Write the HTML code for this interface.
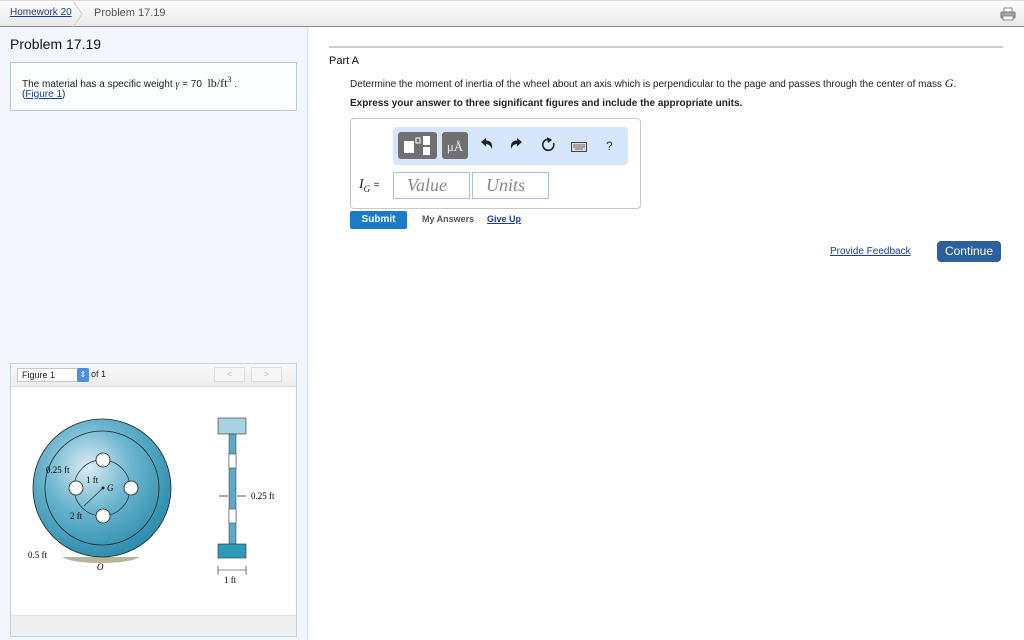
<!DOCTYPE html>
<html><head><meta charset="utf-8"><style>
*{margin:0;padding:0;box-sizing:border-box}
body{width:1024px;height:640px;overflow:hidden;background:#fff;font-family:"Liberation Sans",Arial,sans-serif;color:#222;position:relative}
.top{position:absolute;left:0;top:0;width:1024px;height:27px;background:linear-gradient(#fdfdfd,#e9e9e9);border-bottom:1px solid #8a8a8a;border-top:1px solid #ddd}
.abs{position:absolute}
a{color:#1a3e9a;text-decoration:underline}
.left{position:absolute;left:0;top:27px;width:308px;height:613px;background:#f3f7fd;border-right:1px solid #d8e0ea}
.mi{font-family:"Liberation Serif",serif;font-style:italic}
.btn{position:absolute;border-radius:3px}
</style></head><body>
<div class="top">
<a class="abs" style="left:10px;top:6px;font-size:10px">Homework 20</a>
<svg class="abs" style="left:72px;top:0" width="12" height="26"><path d="M1 0 L10 13 L1 26" fill="none" stroke="#d0d0d0"/></svg>
<div class="abs" style="left:94px;top:6px;font-size:11px;color:#555">Problem 17.19</div>
<svg class="abs" style="left:1000px;top:6px" width="16" height="14"><rect x="4" y="1" width="8" height="5" fill="#fff" stroke="#888"/><rect x="1" y="5" width="14" height="6" rx="1" fill="#9aa" stroke="#777"/><rect x="3" y="9" width="10" height="4" fill="#fff" stroke="#888"/></svg>
</div>
<div class="left">
<div class="abs" style="left:10px;top:9px;font-size:14px;color:#111">Problem 17.19</div>
<div class="abs" style="left:10px;top:35px;width:287px;height:49px;background:#fbfdff;border:1px solid #b7cadc">
<div class="abs" style="left:11px;top:10px;font-size:10px;white-space:nowrap;line-height:13px">The material has a specific weight <span class="mi">γ</span> = 70 &nbsp;<span style="font-family:'Liberation Serif',serif;font-size:12px">lb/ft<span style="font-size:8px;vertical-align:5px">3</span></span> .</div>
<div class="abs" style="left:11px;top:26px;font-size:10px">(<a>Figure 1</a>)</div>
</div>
<div class="abs" style="left:10px;top:336px;width:287px;height:274px;border:1px solid #c4d3e2;background:#fff">
<div class="abs" style="left:0;top:0;width:285px;height:23px;background:linear-gradient(#fafafa,#ececec);border-bottom:1px solid #d6dde6">
<div class="abs" style="left:6px;top:4px;width:72px;height:14px;border:1px solid #c8c8c8;background:#fff;font-size:9px;padding-left:4px;line-height:12px">Figure 1</div>
<div class="abs" style="left:66px;top:4px;width:12px;height:14px;background:#4a90e0;border-radius:2px;color:#fff;font-size:8px;text-align:center;line-height:14px">⇕</div>
<div class="abs" style="left:80px;top:5px;font-size:9px">of 1</div>
<div class="abs" style="left:203px;top:3px;width:31px;height:15px;border:1px solid #ddd;background:#f6f6f6;color:#bbb;font-size:9px;text-align:center;line-height:13px">&lt;</div>
<div class="abs" style="left:240px;top:3px;width:31px;height:15px;border:1px solid #ddd;background:#f6f6f6;color:#bbb;font-size:9px;text-align:center;line-height:13px">&gt;</div>
</div>
<div class="abs" style="left:0;top:251px;width:285px;height:21px;background:#efefef;border-top:1px solid #dde4ec"></div>
<svg class="abs" style="left:-11px;top:-364px" width="310" height="640" font-family="Liberation Serif,serif" font-size="9">
<defs><radialGradient id="g" cx="0.4" cy="0.35" r="0.7"><stop offset="0" stop-color="#dcedf5"/><stop offset="0.45" stop-color="#6bb5cf"/><stop offset="1" stop-color="#2589a8"/></radialGradient></defs>
<path d="M62 557 L140 557 Q130 563 100 563 Q72 563 62 557Z" fill="#bbb49c"/>
<circle cx="102" cy="488" r="69" fill="url(#g)" stroke="#222" stroke-width="0.8"/>
<circle cx="102" cy="488" r="57" fill="none" stroke="#222" stroke-width="0.8"/>
<circle cx="102" cy="488" r="28" fill="none" stroke="#222" stroke-width="0.7"/>
<g fill="#fff" stroke="#222" stroke-width="0.8"><circle cx="103" cy="460" r="7"/><circle cx="131" cy="488" r="7"/><circle cx="103" cy="516" r="7"/><circle cx="76" cy="488" r="7"/></g>
<circle cx="103" cy="488" r="1.5" fill="#222"/><line x1="103" y1="488" x2="84" y2="506" stroke="#222" stroke-width="0.7"/>
<text x="46" y="473">0.25 ft</text><text x="86" y="483">1 ft</text><text x="107" y="491" font-style="italic">G</text><text x="70" y="519">2 ft</text><text x="28" y="558">0.5 ft</text><text x="97" y="570" font-style="italic">O</text>
<rect x="218" y="418" width="28" height="16" fill="#a8d2e2" stroke="#333" stroke-width="0.6"/>
<rect x="229" y="434" width="7" height="110" fill="#5aaac6" stroke="#333" stroke-width="0.5"/>
<rect x="229" y="454" width="7" height="14" fill="#fff" stroke="#333" stroke-width="0.5"/>
<rect x="229" y="509" width="7" height="14" fill="#fff" stroke="#333" stroke-width="0.5"/>
<rect x="218" y="544" width="28" height="14" fill="#2f9ab8" stroke="#333" stroke-width="0.6"/>
<path d="M219 496 H228 M237 496 H246" stroke="#222" stroke-width="0.7"/>
<text x="251" y="499">0.25 ft</text>
<path d="M218 566 V575 M246 566 V575 M218 570 H246" stroke="#222" stroke-width="0.6" fill="none"/>
<text x="224" y="583">1 ft</text>
</svg>
</div>
</div>
<div class="abs" style="left:329px;top:46px;width:674px;height:2px;background:#ccc"></div>
<div class="abs" style="left:329px;top:55px;font-size:11px;color:#111">Part A</div>
<div class="abs" style="left:350px;top:76px;font-size:10px;white-space:nowrap">Determine the moment of inertia of the wheel about an axis which is perpendicular to the page and passes through the center of mass <span class="mi" style="font-size:12px">G</span>.</div>
<div class="abs" style="left:350px;top:98px;font-size:10px;font-weight:bold">Express your answer to three significant figures and include the appropriate units.</div>
<div class="abs" style="left:350px;top:118px;width:291px;height:91px;border:1px solid #c8c8c8;border-radius:4px"></div>
<div class="abs" style="left:393px;top:127px;width:235px;height:38px;background:#d6e7fb;border-radius:4px"></div>
<div class="btn" style="left:398px;top:132px;width:39px;height:27px;background:#707070"></div>
<svg class="abs" style="left:398px;top:132px" width="39" height="27"><rect x="6" y="9" width="10" height="12" fill="#fff"/><rect x="18" y="6" width="4" height="5" fill="none" stroke="#fff"/><rect x="25" y="4" width="7" height="9" fill="#fff"/><rect x="25" y="15" width="7" height="8" fill="#fff"/></svg>
<div class="btn" style="left:442px;top:132px;width:26px;height:27px;background:#707070;color:#eee;font-family:'Liberation Serif',serif;font-size:13px;text-align:center;line-height:29px">μÅ</div>
<svg class="abs" style="left:478px;top:136px" width="80" height="20">
<path d="M3 6 L8 2 L8 4.5 Q15 4.5 14 13 Q12 8 8 8 L8 10.5Z" fill="#222"/>
<path d="M44 6 L39 2 L39 4.5 Q32 4.5 33 13 Q35 8 39 8 L39 10.5Z" fill="#222"/>
<path d="M73 4 A5.5 5.5 0 1 0 75.5 7" fill="none" stroke="#222" stroke-width="1.6"/><path d="M69 1 L74 4 L70 7Z" fill="#222"/>
</svg>
<svg class="abs" style="left:571px;top:142px" width="16" height="10"><rect x="0.5" y="0.5" width="15" height="9" fill="#ddd" stroke="#444"/><path d="M2 3H14M2 5H14M4 7H12" stroke="#666"/></svg>
<div class="abs" style="left:606px;top:139px;font-size:12px;color:#333">?</div>
<div class="abs mi" style="left:359px;top:177px;font-size:14px">I<sub style="font-size:9px">G</sub> <span style="font-style:normal;font-family:'Liberation Sans';font-size:10px">=</span></div>
<div class="abs mi" style="left:393px;top:172px;width:77px;height:27px;border:1px solid #a8bfe6;font-size:18px;color:#888;padding:2px 0 0 13px">Value</div>
<div class="abs mi" style="left:472px;top:172px;width:77px;height:27px;border:1px solid #a8bfe6;font-size:18px;color:#888;padding:2px 0 0 13px">Units</div>
<div class="btn" style="left:350px;top:211px;width:57px;height:18px;background:#1b7bc8;color:#fff;font-size:10px;font-weight:bold;text-align:center;line-height:17px;border-radius:2px">Submit</div>
<div class="abs" style="left:422px;top:214px;font-size:9px;font-weight:bold;color:#555">My Answers</div>
<a class="abs" style="left:487px;top:214px;font-size:9px;font-weight:bold">Give Up</a>
<a class="abs" style="left:830px;top:246px;font-size:10px">Provide Feedback</a>
<div class="btn" style="left:937px;top:241px;width:64px;height:21px;background:#2d5f9f;color:#fff;font-size:12px;text-align:center;line-height:20px;border-radius:4px">Continue</div>
</body></html>
